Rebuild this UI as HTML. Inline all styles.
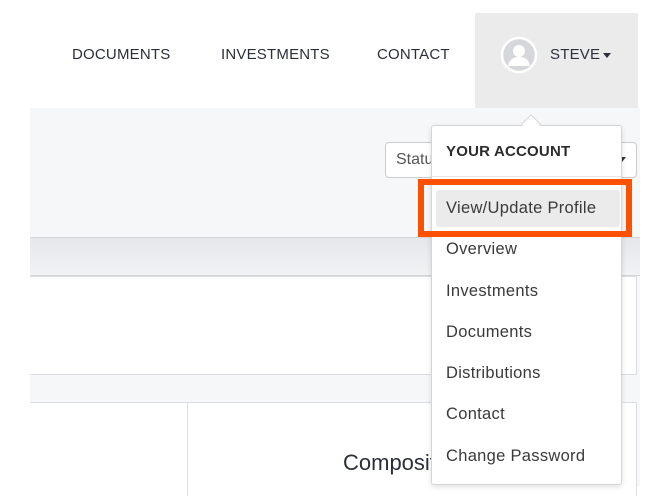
<!DOCTYPE html>
<html><head><meta charset="utf-8"><style>
*{margin:0;padding:0;box-sizing:border-box}
body{width:653px;height:496px;overflow:hidden;background:#fff;font-family:"Liberation Sans",sans-serif;position:relative;color:#333}
.a{position:absolute}
.nav{top:46px;font-size:15px;color:#2b2f3a;letter-spacing:0.2px}
.menu div{position:absolute;left:14px;font-size:16.5px;color:#3a3a3a;letter-spacing:0.3px}
</style></head><body>
<div class="a nav" style="left:72px">DOCUMENTS</div>
<div class="a nav" style="left:221px">INVESTMENTS</div>
<div class="a nav" style="left:377px">CONTACT</div>
<div class="a" style="left:475px;top:13px;width:163px;height:95px;background:#ebebeb"></div>
<svg class="a" style="left:500px;top:36px" width="38" height="38" viewBox="0 0 38 38"><circle cx="19" cy="19" r="17" fill="#d6d7da" stroke="#fff" stroke-width="2.5"/><circle cx="19" cy="15" r="6" fill="#fff"/><path d="M8 30c1-7 6-9 11-9s10 2 11 9z" fill="#fff"/></svg>
<div class="a nav" style="left:550px">STEVE</div>
<div class="a" style="left:603px;top:53px;border-left:4px solid transparent;border-right:4px solid transparent;border-top:5px solid #2b2f3a"></div>
<div class="a" style="left:30px;top:108px;width:610px;height:130px;background:#f6f7f9;border-bottom:1px solid #d4d5d8"></div>
<div class="a" style="left:30px;top:238px;width:610px;height:38px;background:linear-gradient(#e6e7ea,#f1f2f4);border-bottom:1px solid #d4d5d8"></div>
<div class="a" style="left:30px;top:276px;width:610px;height:210px;background:#f6f7f9"></div>
<div class="a" style="left:30px;top:276px;width:607px;height:99px;background:#fff;border:1px solid #dcdde0;border-left:none"></div>
<div class="a" style="left:30px;top:402px;width:607px;height:94px;background:#fff;border:1px solid #dcdde0;border-left:none;border-bottom:none"></div>
<div class="a" style="left:187px;top:402px;width:1px;height:94px;background:#dcdde0"></div>
<div class="a" style="left:343px;top:450px;font-size:22px;color:#2b2f3a">Composition</div>
<div class="a" style="left:385px;top:142px;width:252px;height:36px;background:#fff;border:1px solid #ccc;border-radius:4px;font-size:16px;padding:8px 10px;color:#555">Status</div>
<div class="a" style="left:618px;top:157px;border-left:4px solid transparent;border-right:4px solid transparent;border-top:5px solid #333"></div>
<div class="a menu" style="left:431px;top:125px;width:191px;height:360px;background:#fff;border:1px solid #d5d5d5;border-radius:3px;box-shadow:0 2px 6px rgba(0,0,0,.12)">
<div style="top:17px;font-weight:bold;font-size:15px;color:#2b2b2b;letter-spacing:0.2px">YOUR ACCOUNT</div>
<div style="left:0;top:50px;width:189px;height:1px;background:#e5e5e5"></div>
<div style="left:4px;top:64px;width:184px;height:37px;background:#ebebeb;border-radius:3px"></div>
<div style="top:73px">View/Update Profile</div>
<div style="top:114px">Overview</div>
<div style="top:156px">Investments</div>
<div style="top:197px">Documents</div>
<div style="top:238px">Distributions</div>
<div style="top:279px">Contact</div>
<div style="top:321px">Change Password</div>
</div>
<div class="a" style="left:524px;top:117px;width:14px;height:14px;background:#fff;border-left:1px solid #d5d5d5;border-top:1px solid #d5d5d5;transform:rotate(45deg)"></div>
<div class="a" style="left:418px;top:179px;width:214px;height:58px;border:6px solid #ff5000"></div>
</body></html>
